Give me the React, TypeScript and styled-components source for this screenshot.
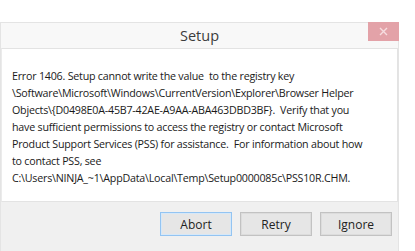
import styled, { createGlobalStyle } from "styled-components";

const GlobalStyle = createGlobalStyle`
  html, body {
    margin: 0;
    padding: 0;
    background: #ffffff;
  }
  body {
    font-family: "Open Sans", "Noto Sans", "Liberation Sans", sans-serif;
  }
`;

const Page = styled.div`
  width: 415px;
  height: 251px;
  padding-top: 22px;
  box-sizing: border-box;
  overflow: hidden;
`;

const Window = styled.div`
  width: 399px;
  height: 229px;
  display: flex;
  flex-direction: column;
  background: #f0f0f0;
  border-left: 1px solid #e4e4e4;
  border-right: 1px solid #e4e4e4;
  box-sizing: border-box;
`;

const TitleBar = styled.div`
  height: 26px;
  flex: none;
  display: flex;
  align-items: center;
  justify-content: center;
  position: relative;
  background: #f8f8f8;
  border-top: 1px solid #e4e4e4;
  box-sizing: border-box;
`;

const Title = styled.span`
  font-size: 14.5px;
  color: #3c3c3c;
  margin-top: -1px;
`;

const CloseButton = styled.div`
  position: absolute;
  top: -1px;
  right: -1px;
  width: 31px;
  height: 19px;
  background: #e3a2a8;
  display: flex;
  align-items: center;
  justify-content: center;
`;

const Content = styled.div`
  height: 154px;
  flex: none;
  background: #ffffff;
  border: 1px solid #e3e3e3;
  border-left-color: #ebebeb;
  box-sizing: border-box;
  padding: 19px 0 0 10px;
`;

const Message = styled.p`
  margin: 0;
  font-size: 10.7px;
  line-height: 17px;
  color: #1a1a1a;
  white-space: pre;
  letter-spacing: -0.22px;
`;

const Footer = styled.div`
  flex: 1;
  display: flex;
  justify-content: flex-end;
  align-items: flex-start;
  gap: 8px;
  padding: 10px 6px 0 0;
`;

const Button = styled.button<{ $default?: boolean }>`
  width: 72px;
  height: 24px;
  padding: 0;
  font-family: inherit;
  font-size: 12px;
  color: #222222;
  background: #e6e6e6;
  border: 1px solid ${(p) => (p.$default ? "#93c4f2" : "#c2c2c2")};
  box-shadow: inset 0 0 0 1px ${(p) => (p.$default ? "#d6e8f8" : "#dcdcdc")};
  border-radius: 0;
`;

const lines = [
  "Error 1406. Setup cannot write the value  to the registry key",
  "\\Software\\Microsoft\\Windows\\CurrentVersion\\Explorer\\Browser Helper",
  "Objects\\{D0498E0A-45B7-42AE-A9AA-ABA463DBD3BF}.  Verify that you",
  "have sufficient permissions to access the registry or contact Microsoft",
  "Product Support Services (PSS) for assistance.  For information about how",
  "to contact PSS, see",
  "C:\\Users\\NINJA_~1\\AppData\\Local\\Temp\\Setup0000085c\\PSS10R.CHM.",
];

export default function App() {
  return (
    <Page>
      <GlobalStyle />
      <Window>
        <TitleBar>
          <Title>Setup</Title>
          <CloseButton>
            <svg width="9" height="9" viewBox="0 0 9 9">
              <path d="M1 1 L8 8 M8 1 L1 8" stroke="#f6dde0" strokeWidth="1.4" />
            </svg>
          </CloseButton>
        </TitleBar>
        <Content>
          <Message>{lines.join("\n")}</Message>
        </Content>
        <Footer>
          <Button $default>Abort</Button>
          <Button>Retry</Button>
          <Button>Ignore</Button>
        </Footer>
      </Window>
    </Page>
  );
}
